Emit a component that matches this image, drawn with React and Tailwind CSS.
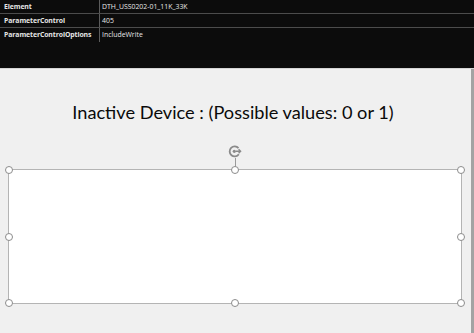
const rows = [
  ["Element", "DTH_USS0202-01_11K_33K"],
  ["ParameterControl", "405"],
  ["ParameterControlOptions", "IncludeWrite"],
];

const handles = [
  "left-0 top-0",
  "left-1/2 top-0",
  "left-full top-0",
  "left-0 top-1/2",
  "left-full top-1/2",
  "left-0 top-full",
  "left-1/2 top-full",
  "left-full top-full",
];

const Handle = ({ pos }) => (
  <span
    className={`absolute ${pos} -translate-x-1/2 -translate-y-1/2 w-[8px] h-[8px] rounded-full bg-white border border-[#8c8c8c]`}
  />
);

const RotateIcon = () => (
  <svg width="14" height="13" viewBox="0 0 14 13" fill="none">
    <path
      d="M10.5 3.2A5 5 0 1 0 10.8 9.2"
      stroke="#8a8a8a"
      strokeWidth="1.8"
    />
    <circle cx="6.3" cy="6.3" r="1.6" fill="#8a8a8a" />
    <path d="M8 6.3h4.5M10.6 4.3l2 2-2 2" stroke="#8a8a8a" strokeWidth="1.4" />
  </svg>
);

export default function App() {
  return (
    <div
      className="w-[474px] h-[333px] overflow-hidden flex flex-col bg-[#f0f0f0]"
      style={{ fontFamily: '"Open Sans", "Noto Sans", sans-serif' }}
    >
      {/* properties panel */}
      <div className="h-[68px] shrink-0 bg-[#0c0c0c] text-[6.9px] leading-[13px] text-[#e6e6e6]">
        {rows.map(([label, value], i) => (
          <div
            key={label}
            className={i < 2 ? "flex h-[14px] border-b border-[#4c4c4c]" : "flex h-[14px]"}
          >
            <div className="w-[100px] shrink-0 pl-[4px] font-bold tracking-[-0.1px] border-r border-[#5c5c5c] whitespace-nowrap">
              {label}
            </div>
            <div className="pl-[2px] whitespace-nowrap">{value}</div>
          </div>
        ))}
      </div>

      {/* canvas */}
      <div className="flex-1 flex border-t border-[#d6d6d6]">
        <div className="flex-1 flex flex-col">
          <h1
            className="mt-[31px] pr-[5px] text-center text-[18.2px] leading-[24px] text-[#0a0a0a]"
            style={{ fontFamily: 'Lato, "Open Sans", sans-serif' }}
          >
            Inactive Device : (Possible values: 0 or 1)
          </h1>

          <div className="mt-[21px] ml-[228px] w-[14px] flex flex-col items-center">
            <RotateIcon />
            <div className="w-px h-[11px] bg-[#9a9a9a]" />
          </div>

          <div className="relative ml-[8px] w-[454px] h-[135px] bg-white border border-[#b4b4b4]">
            {handles.map((pos) => (
              <Handle key={pos} pos={pos} />
            ))}
          </div>
        </div>
        <div className="w-[3px] bg-[#a3a3a3]" />
      </div>
    </div>
  );
}
